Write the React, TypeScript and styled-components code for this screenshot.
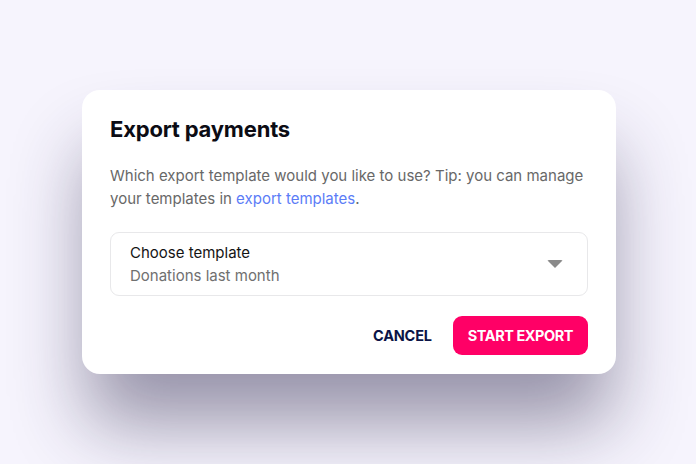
import React from "react";
import styled, { createGlobalStyle } from "styled-components";

const Global = createGlobalStyle`
  html, body { margin: 0; padding: 0; }
  body {
    background: #f6f4fd;
    font-family: "Inter", "Noto Sans", sans-serif;
    -webkit-font-smoothing: antialiased;
  }
`;

const Stage = styled.div`
  width: 696px;
  height: 464px;
  box-sizing: border-box;
  padding-left: 2px;
  display: flex;
  align-items: center;
  justify-content: center;
  overflow: hidden;
  background: #f6f4fd;
`;

const Card = styled.div`
  width: 534px;
  box-sizing: border-box;
  background: #ffffff;
  border-radius: 18px;
  padding: 24px 28px 19px;
  box-shadow: 0 55px 75px -6px rgba(40, 32, 70, 0.46);
  display: flex;
  flex-direction: column;
`;

const Title = styled.h2`
  margin: 0;
  font-size: 22px;
  line-height: 30px;
  font-weight: 700;
  letter-spacing: -0.2px;
  color: #0c0c14;
`;

const Body = styled.p`
  margin: 20px 0 0;
  font-size: 15px;
  line-height: 23px;
  color: #686868;
`;

const Link = styled.span`
  color: #5b7cf7;
  cursor: pointer;
`;

const Select = styled.div`
  margin-top: 22px;
  border: 1.5px solid #e8e8ea;
  border-radius: 9px;
  padding: 8px 24px 8px 19px;
  display: flex;
  align-items: center;
  justify-content: space-between;
`;

const SelectText = styled.div`
  display: flex;
  flex-direction: column;
`;

const SelectLabel = styled.span`
  font-size: 15px;
  line-height: 23px;
  color: #141414;
`;

const SelectValue = styled.span`
  font-size: 15px;
  line-height: 23px;
  color: #707070;
`;

const Caret = styled.span`
  width: 0;
  height: 0;
  border-left: 8px solid transparent;
  border-right: 8px solid transparent;
  border-top: 8px solid #8a8a8a;
  border-radius: 2px;
`;

const Actions = styled.div`
  margin-top: 20px;
  display: flex;
  justify-content: flex-end;
  align-items: center;
  gap: 21px;
`;

const Button = styled.button<{ $primary?: boolean }>`
  font-family: inherit;
  font-size: 14.5px;
  font-weight: 700;
  letter-spacing: ${(p) => (p.$primary ? "-0.45px" : "-0.2px")};
  text-transform: uppercase;
  border: none;
  cursor: pointer;
  height: 39px;
  border-radius: 9px;
  padding: 0 ${(p) => (p.$primary ? "15px" : "0")};
  background: ${(p) => (p.$primary ? "#ff0066" : "transparent")};
  color: ${(p) => (p.$primary ? "#ffffff" : "#0b1446")};
`;

export default function App() {
  return (
    <>
      <Global />
      <Stage>
        <Card>
          <Title>Export payments</Title>
          <Body>
            Which export template would you like to use? Tip: you can manage
            your templates in <Link>export templates</Link>.
          </Body>
          <Select>
            <SelectText>
              <SelectLabel>Choose template</SelectLabel>
              <SelectValue>Donations last month</SelectValue>
            </SelectText>
            <Caret />
          </Select>
          <Actions>
            <Button>Cancel</Button>
            <Button $primary>Start export</Button>
          </Actions>
        </Card>
      </Stage>
    </>
  );
}
